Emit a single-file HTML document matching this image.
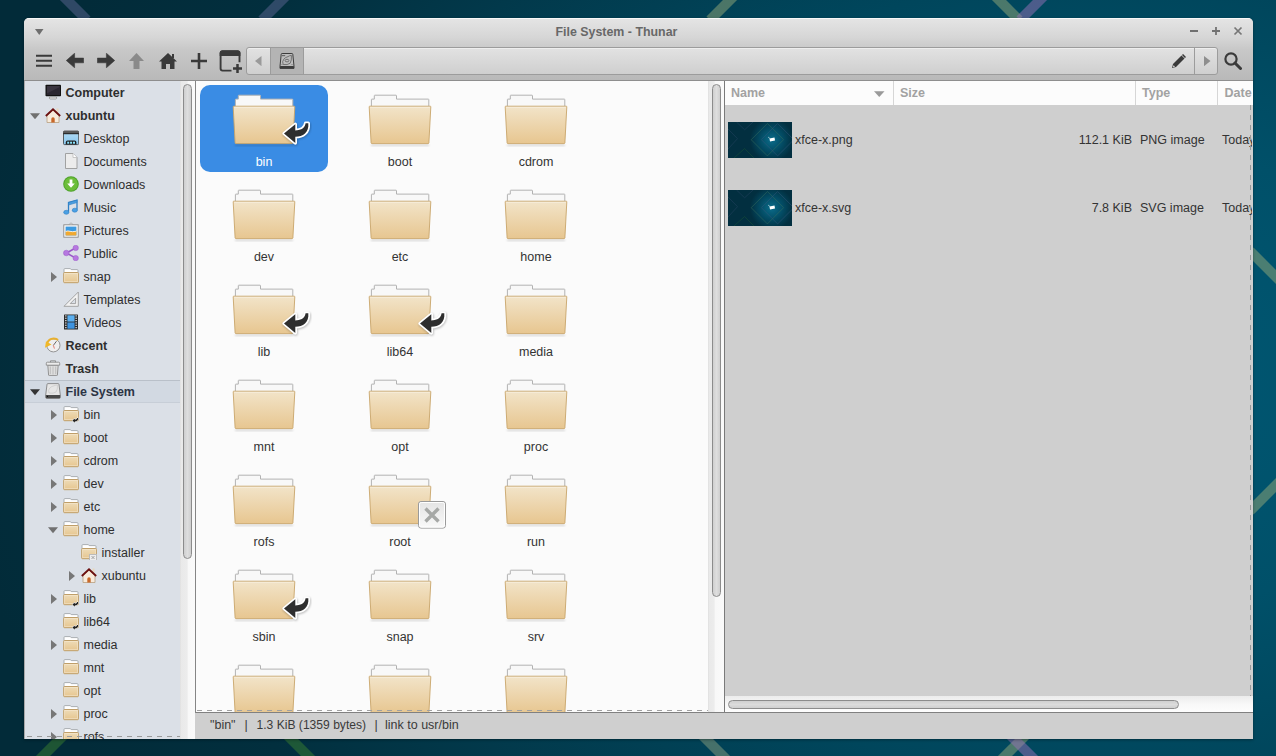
<!DOCTYPE html><html><head><meta charset="utf-8"><style>
*{margin:0;padding:0;box-sizing:border-box}
html,body{width:1276px;height:756px;overflow:hidden}
body{position:relative;font-family:"Liberation Sans", sans-serif;font-size:12.5px;color:#333;
background:radial-gradient(1150px 800px at 1100px 380px,#005874 0%,#005069 30%,#00465c 50%,#02394b 70%,#022f3e 85%,#022b39 100%);}
.a{position:absolute}
.t{position:absolute;white-space:pre;line-height:15px}
.b{font-weight:bold}
#win{left:24px;top:18px;width:1229px;height:721px;border-radius:5px 5px 0 0;overflow:hidden;
background:#cfcfcf;box-shadow:0 1px 3px rgba(0,0,0,.35)}
#head{left:0;top:0;width:1229px;height:62px;background:linear-gradient(#e4e4e4,#d6d6d6 30%,#c8c8c8 50%,#b9b9b9);border-top:1px solid #f8f8f8}
</style></head><body>
<svg class="a" style="left:0;top:0" width="1276" height="756"><g stroke-width="10"><line x1="62" y1="-5" x2="87" y2="20" stroke="rgba(91,102,145,.5)"/><line x1="287" y1="-5" x2="262" y2="20" stroke="rgba(91,102,145,.5)"/><line x1="735" y1="-5" x2="710" y2="20" stroke="rgba(150,170,120,.5)"/><line x1="994" y1="-5" x2="1019" y2="20" stroke="rgba(150,170,120,.5)"/><line x1="1045" y1="-5" x2="1020" y2="20" stroke="rgba(152,114,184,.5)"/><line x1="1250" y1="251" x2="1280" y2="281" stroke="rgba(150,170,120,.5)"/><line x1="1250" y1="511" x2="1280" y2="481" stroke="rgba(150,170,120,.5)"/><line x1="64" y1="735" x2="39" y2="760" stroke="rgba(58,127,48,.5)"/><line x1="287" y1="735" x2="312" y2="760" stroke="rgba(58,127,48,.5)"/><line x1="702" y1="735" x2="727" y2="760" stroke="rgba(140,160,126,.5)"/><line x1="1026" y1="735" x2="1001" y2="760" stroke="rgba(150,170,120,.5)"/><line x1="1010" y1="735" x2="1035" y2="760" stroke="rgba(152,114,184,.5)"/></g></svg>
<svg width="0" height="0" style="position:absolute"><defs>
<linearGradient id="gf" x1="0" y1="0" x2="0" y2="1"><stop offset="0" stop-color="#f3e4c8"/><stop offset="1" stop-color="#e6c48e"/></linearGradient>
<linearGradient id="gfs" x1="0" y1="0" x2="0" y2="1"><stop offset="0" stop-color="#eedcb8"/><stop offset="1" stop-color="#e6c58e"/></linearGradient>
<linearGradient id="gbf" x1="0" y1="0" x2="0" y2="1"><stop offset="0" stop-color="#f2e4c9"/><stop offset="1" stop-color="#e7c690"/></linearGradient>
<linearGradient id="gxb" x1="0" y1="0" x2="0" y2="1"><stop offset="0" stop-color="#e4e4e4"/><stop offset="1" stop-color="#f9f9f9"/></linearGradient>
<filter id="fsh" x="-20%" y="-20%" width="140%" height="140%"><feGaussianBlur stdDeviation="0.8"/></filter>
<symbol id="bf" viewBox="0 0 80 60"><path d="M3.4 12.5V5.6Q3.4 5.1 3.9 5.1H6.3V1.7Q6.3 1.2 6.8 1.2H28Q28.5 1.2 28.5 1.7V5.1H60.3Q60.8 5.1 60.8 5.6V12.5Z" fill="#f8f8f8" stroke="#b2b2b2" stroke-width="1"/><path d="M3.5 50.5H60.5L61.5 52H2.5Z" fill="#000" opacity=".18" filter="url(#fsh)"/><path d="M1.8 12.2H62.2Q62.9 12.2 62.8 12.9L60.9 48.9Q60.8 49.6 60.1 49.6H3.9Q3.2 49.6 3.1 48.9L1.2 12.9Q1.1 12.2 1.8 12.2Z" fill="url(#gbf)" stroke="#c8a56a" stroke-width="0.9"/><path d="M2.2 13.3H61.8" stroke="#f7eddb" stroke-width="1"/></symbol>
<symbol id="emb-l" viewBox="0 0 80 60"><path d="M52 39.5L63.3 30.3V36.4C68 36.4 72.7 35 73.6 29.3H76.3C77.2 38.5 71 42.8 63.3 42.8V49Z" fill="#000" opacity=".25" transform="translate(0.6 1)" stroke="#000" stroke-width="3.6" stroke-linejoin="round" filter="url(#fsh)"/><path d="M52 39.5L63.3 30.3V36.4C68 36.4 72.7 35 73.6 29.3H76.3C77.2 38.5 71 42.8 63.3 42.8V49Z" fill="#2e2e2e" stroke="#fff" stroke-width="3.4" stroke-linejoin="round" paint-order="stroke"/></symbol>
<symbol id="emb-x" viewBox="0 0 80 60"><rect x="50.5" y="27.5" width="27" height="26.6" rx="2.5" fill="url(#gxb)" stroke="#9a9a9a" stroke-width="1"/><rect x="51.5" y="28.5" width="25" height="24.6" rx="1.8" fill="none" stroke="#fff" stroke-width="1"/><path d="M57.5 34.5L70.5 47.5M70.5 34.5L57.5 47.5" stroke="#a6a8a6" stroke-width="3.4"/></symbol>
<radialGradient id="gth" cx="0.68" cy="0.5" r="0.6" gradientTransform="translate(0.68 0.5) scale(0.5625 1) translate(-0.68 -0.5)"><stop offset="0" stop-color="#0b6c8a"/><stop offset="0.55" stop-color="#034a62"/><stop offset="1" stop-color="#022f40"/></radialGradient>
<symbol id="thumb" viewBox="0 0 64 36"><rect width="64" height="36" fill="#02303f"/><rect width="64" height="36" fill="url(#gth)"/>
<g fill="none" stroke-width="0.45"><path d="M39.4 1.5L55.6 17.7L39.4 33.9L23.2 17.7Z" stroke="#3f7560"/><path d="M49.6 1.5L65.8 17.7L49.6 33.9L33.4 17.7Z" stroke="#3d5a80"/>
<path d="M8.5 0L16.6 7.8L25 0" stroke="#2d4866"/><path d="M0 7L9.5 16.7L0 27" stroke="#2d4866"/><path d="M6 36L16.6 26.5L26 36" stroke="#1f5a36"/></g>
<path d="M41.5 16.5L46.5 15.5L47 18.5L42 19.5Z" fill="#fff"/><path d="M40 15L42 16.5" stroke="#fff" stroke-width="0.5"/></symbol>
<symbol id="i-fold" viewBox="0 0 16 16"><path d="M1 4.8V1.5Q1 0.6 1.9 0.6H7Q7.8 0.6 8.2 1.6H14.1Q15 1.6 15 2.5V4.8Z" fill="#fff" stroke="#a2a6aa" stroke-width="0.9"/><rect x="0.7" y="4.5" width="14.7" height="10.2" rx="0.8" fill="url(#gfs)" stroke="#bf9e68" stroke-width="1"/><rect x="1.7" y="5.6" width="12.7" height="8.1" fill="none" stroke="#f6ead4" stroke-width="0.7" opacity=".8"/></symbol>
<symbol id="i-foldl" viewBox="0 0 16 20"><use href="#i-fold" width="16" height="16"/><path d="M9.4 14.6L11.8 12.4V13.7Q13.8 13.7 14.2 12H15.3Q15.3 15.3 11.8 15.4V16.8Z" fill="#222" stroke="#fff" stroke-width="1" stroke-linejoin="round" paint-order="stroke"/></symbol>
<symbol id="i-foldx" viewBox="0 0 16 16"><use href="#i-fold"/><rect x="8.5" y="10.5" width="7" height="6" fill="#eee" stroke="#bbb" stroke-width="1"/><path d="M10.5 12L13.5 15M13.5 12L10.5 15" stroke="#999" stroke-width="0.9"/></symbol>
<symbol id="i-comp" viewBox="0 0 16 16"><rect x="0.5" y="0.8" width="15.5" height="11.5" rx="0.8" fill="#111"/><rect x="1.8" y="2" width="13" height="9" fill="#3a3540"/><path d="M1.8 9.5L14.8 3V11H1.8Z" fill="#2a2630"/><path d="M4.5 13H11.5Q12 15 11 15H5Q4 15 4.5 13Z" fill="#e8e8e8" stroke="#888" stroke-width="0.7"/></symbol>
<symbol id="i-home" viewBox="0 0 16 16"><path d="M2 8.5V15.5H14V8.5L8 3Z" fill="#f7ebdc" stroke="#b8a080" stroke-width="0.8"/><rect x="11.5" y="1.5" width="2" height="4" fill="#e8d8c0"/><path d="M0.8 9L8 2.3L15.2 9" fill="none" stroke="#6b1010" stroke-width="1.8"/><path d="M6.3 15.6V12Q6.3 10.3 8 10.3Q9.7 10.3 9.7 12V15.6Z" fill="#c8682a"/></symbol>
<linearGradient id="gdk" x1="0" y1="0" x2="0" y2="1"><stop offset="0" stop-color="#b4dcf4"/><stop offset="1" stop-color="#88c6ee"/></linearGradient><symbol id="i-desk" viewBox="0 0 16 16"><rect x="0.5" y="1.2" width="15.2" height="13.4" rx="1" fill="url(#gdk)" stroke="#3a3a3a" stroke-width="0.8"/><path d="M0.1 4.1V2.2Q0.1 0.8 1.5 0.8H14.7Q16.1 0.8 16.1 2.2V4.1Z" fill="#5a5a5a"/><rect x="0.1" y="3.3" width="16" height="0.9" fill="#1a1a1a"/><path d="M2.8 14.6V12.4Q2.8 10.6 4.6 10.6H11.6Q13.4 10.6 13.4 12.4V14.6Z" fill="#1e1e1e"/><rect x="4.2" y="11.7" width="2" height="2" fill="#8ae4ff"/><rect x="7.1" y="11.7" width="2" height="2" fill="#8ae4ff"/><rect x="10" y="11.7" width="2" height="2" fill="#8ae4ff"/></symbol>
<symbol id="i-doc" viewBox="0 0 16 16"><path d="M2.5 0.5H10L14 4.5V15.5H2.5Z" fill="#ececec" stroke="#9a9a9a" stroke-width="0.9"/><path d="M10 0.5V4.5H14" fill="#fff" stroke="#bbb" stroke-width="0.8"/></symbol>
<symbol id="i-dl" viewBox="0 0 16 16"><circle cx="8" cy="8" r="7.8" fill="#4ea22a"/><circle cx="8" cy="8" r="6.8" fill="#6cbe3a"/><path d="M6.6 3.5H9.4V7.5H11.8L8 11.8L4.2 7.5H6.6Z" fill="#fff"/></symbol>
<symbol id="i-music" viewBox="0 0 16 16"><path d="M5.5 12.8V3.6L14 1.2V10.8" fill="none" stroke="#2f7fc4" stroke-width="1.3"/><path d="M5.5 3.6L14 1.2V3.6L5.5 6Z" fill="#4a9ee0" stroke="#2f7fc4" stroke-width="0.6"/><ellipse cx="3.3" cy="13.3" rx="2.6" ry="2" fill="#4aa0e4" stroke="#2f7fc4" stroke-width="0.6"/><ellipse cx="11.8" cy="11.2" rx="2.6" ry="2" fill="#4aa0e4" stroke="#2f7fc4" stroke-width="0.6"/></symbol>
<symbol id="i-pic" viewBox="0 0 16 16"><path d="M5.5 3L8 0.8L10.5 3" fill="#f4f4f4" stroke="#999" stroke-width="0.7"/><rect x="0.8" y="2.8" width="14.4" height="12.4" fill="#fafafa" stroke="#8a8a8a" stroke-width="0.9"/><rect x="2.6" y="4.6" width="10.8" height="8.8" fill="#3c9ae0"/><path d="M2.6 9.3Q5 8.3 7 9.2T13.4 9V13.4H2.6Z" fill="#f0a830"/><path d="M2.6 9.5Q5 8.5 7 9.3T13.4 9.2" fill="none" stroke="#fff" stroke-width="0.8"/></symbol>
<symbol id="i-pub" viewBox="0 0 16 16"><path d="M3.5 8L12.5 3M3.5 8L12.5 13" stroke="#9a58c8" stroke-width="1.5"/><circle cx="3.3" cy="8" r="2.8" fill="#b678e0" stroke="#9a58c8" stroke-width="0.5"/><circle cx="12.7" cy="2.9" r="2.7" fill="#b678e0" stroke="#9a58c8" stroke-width="0.5"/><circle cx="12.7" cy="13.1" r="2.7" fill="#b678e0" stroke="#9a58c8" stroke-width="0.5"/></symbol>
<symbol id="i-tmpl" viewBox="0 0 16 16"><path d="M1 15.3L15.3 1V15.3Z M7.2 12.6H12.6V7.2Z" fill="#f2f2f2" fill-rule="evenodd" stroke="#9c9c9c" stroke-width="0.9" stroke-linejoin="round"/></symbol>
<symbol id="i-vid" viewBox="0 0 16 16"><rect x="1" y="0.5" width="14" height="15" rx="0.5" fill="#2a2a2a"/><rect x="4.4" y="1.3" width="7.2" height="6.3" fill="#5cb0f0"/><rect x="4.4" y="8.4" width="7.2" height="6.3" fill="#3f94e0"/><rect x="2.2" y="1.30" width="1.3" height="1.2" fill="#eee"/><rect x="12.5" y="1.30" width="1.3" height="1.2" fill="#eee"/><rect x="2.2" y="3.65" width="1.3" height="1.2" fill="#eee"/><rect x="12.5" y="3.65" width="1.3" height="1.2" fill="#eee"/><rect x="2.2" y="6.00" width="1.3" height="1.2" fill="#eee"/><rect x="12.5" y="6.00" width="1.3" height="1.2" fill="#eee"/><rect x="2.2" y="8.35" width="1.3" height="1.2" fill="#eee"/><rect x="12.5" y="8.35" width="1.3" height="1.2" fill="#eee"/><rect x="2.2" y="10.70" width="1.3" height="1.2" fill="#eee"/><rect x="12.5" y="10.70" width="1.3" height="1.2" fill="#eee"/><rect x="2.2" y="13.05" width="1.3" height="1.2" fill="#eee"/><rect x="12.5" y="13.05" width="1.3" height="1.2" fill="#eee"/></symbol>
<symbol id="i-recent" viewBox="0 0 16 16"><circle cx="8.4" cy="8.3" r="6.6" fill="#efefef" stroke="#8a8a8a" stroke-width="0.9"/><path d="M8.4 8.3L11.5 4.2" stroke="#444" stroke-width="0.8"/><path d="M8.4 8.3L9.4 11.6" stroke="#e06050" stroke-width="0.8"/><path d="M2.2 6.5Q3.5 1.6 8.8 1.4Q11.5 1.4 13 3" fill="none" stroke="#e8b030" stroke-width="2"/><path d="M0 10.8L1 4.2L6.5 7.5Z" fill="#f0b828"/></symbol>
<symbol id="i-trash" viewBox="0 0 16 16"><path d="M2.8 5.2L3.6 15Q3.7 15.6 4.3 15.6H11.7Q12.3 15.6 12.4 15L13.2 5.2Z" fill="#dedede" stroke="#8a8a8a" stroke-width="0.9"/><path d="M5.3 6.5V14.2M8 6.5V14.5M10.7 6.5V14.2" stroke="#b8b8b8" stroke-width="0.9"/><path d="M1.3 3.2Q1.3 2.2 2.3 2.2H13.7Q14.7 2.2 14.7 3.2V5.2H1.3Z" fill="#ececec" stroke="#8a8a8a" stroke-width="0.9"/><path d="M5.5 2.2V0.8H10.5V2.2" fill="none" stroke="#8a8a8a" stroke-width="0.9"/></symbol>
<symbol id="i-hd" viewBox="0 0 16 16"><path d="M2 1.5Q2.1 0.6 3 0.6H13Q13.9 0.6 14 1.5L15.3 12V14.5Q15.3 15.4 14.4 15.4H1.6Q0.7 15.4 0.7 14.5V12Z" fill="#e6e6e6" stroke="#777" stroke-width="0.8"/><path d="M0.8 12H15.2V14.5Q15.2 15.3 14.4 15.3H1.6Q0.8 15.3 0.8 14.5Z" fill="#4a4a4a"/><circle cx="2.5" cy="13.4" r="0.6" fill="#111"/><path d="M4 10Q2.8 7 4.8 5Q6.5 3.2 9 2.8Q11 2 12.5 2.2Q12.8 6.5 11 9Q8.5 10.8 4 10Z" fill="none" stroke="#c8c8c8" stroke-width="0.7"/></symbol>
</defs></svg>
<div id="win" class="a">
<div id="head" class="a"></div>
<svg class="a" style="left:11px;top:11px" width="9" height="6" viewBox="0 0 9 6" ><path d="M0 0H8.5L4.25 6Z" fill="#6e6e6e"/></svg>
<div class="t b" style="left:531.5px;top:7px;color:#686868;font-size:12.4px">File System - Thunar</div>
<svg class="a" style="left:1165px;top:8px" width="10" height="10" viewBox="0 0 10 10" ><rect x="1" y="4" width="8" height="2" fill="#707070"/></svg>
<svg class="a" style="left:1187px;top:8px" width="10" height="10" viewBox="0 0 10 10" ><path d="M1 5H9M5 1V9" stroke="#727272" stroke-width="1.8"/></svg>
<svg class="a" style="left:1209px;top:8px" width="10" height="10" viewBox="0 0 10 10" ><path d="M1.5 1.5L8.5 8.5M8.5 1.5L1.5 8.5" stroke="#767676" stroke-width="1.7"/></svg>
<svg class="a" style="left:12px;top:36px" width="16" height="14" viewBox="0 0 16 14" ><path d="M0 1.8H16M0 6.8H16M0 11.8H16" stroke="#3a3a3a" stroke-width="2"/></svg>
<svg class="a" style="left:42px;top:35px" width="18" height="15" viewBox="0 0 18 15" ><path d="M0.3 7.5L8.6 0.2V5.1H17.6V9.8H8.6V14.8Z" fill="#3a3a3a" stroke="#3a3a3a" stroke-width="0.6" stroke-linejoin="round"/></svg>
<svg class="a" style="left:73px;top:35px" width="18" height="15" viewBox="0 0 18 15" ><path d="M17.7 7.5L9.4 0.2V5.1H0.4V9.8H9.4V14.8Z" fill="#3a3a3a" stroke="#3a3a3a" stroke-width="0.6" stroke-linejoin="round"/></svg>
<svg class="a" style="left:105px;top:35px" width="15" height="16" viewBox="0 0 15 16" ><path d="M7.5 0L15 8H10.5V16H4.5V8H0Z" fill="#8a8a8a"/></svg>
<svg class="a" style="left:135px;top:35px" width="18" height="16" viewBox="0 0 18 16" ><path d="M9 0L18 8.5H15.5V16H11V11H7V16H2.5V8.5H0Z" fill="#3a3a3a"/><rect x="13" y="1" width="2" height="4" fill="#3a3a3a"/></svg>
<svg class="a" style="left:167px;top:35px" width="16" height="16" viewBox="0 0 16 16" ><path d="M0 8H16M8 0V16" stroke="#3a3a3a" stroke-width="2.6"/></svg>
<svg class="a" style="left:195px;top:32px" width="24" height="24" viewBox="0 0 24 24" ><path d="M1.6 13V18.5Q1.6 20.6 3.6 20.6H12.5M1.6 13V3.2Q1.6 1.3 3.5 1.3H18.6Q20.5 1.3 20.5 3.2V12.3" stroke="#3a3a3a" stroke-width="1.9" fill="none"/><path d="M0.7 6H21.4V3.2Q21.4 0.4 18.6 0.4H3.5Q0.7 0.4 0.7 3.2Z" fill="#3a3a3a"/><path d="M14 18.5H23M18.5 14V23" stroke="#3a3a3a" stroke-width="2.5"/></svg>
<div class="a" style="left:222px;top:29px;width:972px;height:28px;border:1px solid #9c9c9c;border-radius:3px;background:linear-gradient(#e2e2e2,#cfcfcf);box-shadow:inset 0 1px 0 #eee"></div>
<div class="a" style="left:246px;top:30px;width:34px;height:26px;background:#b4b4b4;border-left:1px solid #9c9c9c;border-right:1px solid #9c9c9c"></div>
<div class="a" style="left:1170px;top:30px;width:1px;height:26px;background:#9c9c9c"></div>
<svg class="a" style="left:230.5px;top:38px" width="7" height="10" viewBox="0 0 7 10" ><path d="M6.5 0V10.2L0 5.1Z" fill="#9a9a9a"/></svg>
<svg class="a" style="left:1180px;top:38px" width="7" height="10" viewBox="0 0 7 10" ><path d="M0 0V10.2L6.5 5.1Z" fill="#8e8e8e"/></svg>
<svg class="a" style="left:255px;top:35px" width="16" height="16" viewBox="0 0 16 16" ><path d="M2.2 1.3Q2.3 0.5 3.1 0.5H12.9Q13.7 0.5 13.8 1.3L15 13.2V15Q15 15.8 14.2 15.8H1.8Q1 15.8 1 15V13.2Z" fill="#bdbdbd" stroke="#3c3c3c" stroke-width="1"/><rect x="1" y="13" width="14" height="2.8" rx="0.6" fill="#3c3c3c"/><path d="M4.2 11.5Q2.8 8.5 4.8 6.2Q6.5 4.2 9 3.6Q10.8 2.4 12.4 2.4Q12.8 7.5 11.2 10.2Q8.5 12.3 4.2 11.5Z" fill="none" stroke="#6a6a6a" stroke-width="0.9"/><ellipse cx="8" cy="7.6" rx="1.9" ry="1.3" fill="none" stroke="#6a6a6a" stroke-width="0.9"/><rect x="3" y="2" width="3.2" height="1.2" fill="#6a6a6a"/><circle cx="3" cy="11.6" r="0.5" fill="#6a6a6a"/><circle cx="13" cy="11.6" r="0.5" fill="#6a6a6a"/></svg>
<svg class="a" style="left:1147px;top:36px" width="15" height="15" viewBox="0 0 15 15" ><path d="M1 14L2 10L10.5 1.5L13.5 4.5L5 13Z" fill="#3a3a3a"/><path d="M11.5 0.5L14.5 3.5" stroke="#3a3a3a" stroke-width="1.5"/><path d="M2 13.2L2.6 11.2L4 12.6Z" fill="#eee"/></svg>
<svg class="a" style="left:1200px;top:34px" width="18" height="18" viewBox="0 0 18 18" ><circle cx="7" cy="7" r="5.6" fill="none" stroke="#3a3a3a" stroke-width="2.2"/><path d="M11 11L16.5 16.5" stroke="#3a3a3a" stroke-width="3" stroke-linecap="round"/></svg>
<div class="a" style="left:0;top:63px;width:156px;height:658px;background:#dbe0e7;border-left:1px solid #a8a8a8"></div>
<div class="a" style="left:156px;top:63px;width:15px;height:658px;background:linear-gradient(90deg,#dcdcdc 0,#e9e9e9 1px,#ececec 7px,#f8f8f8 8.5px,#fafafa)"></div>
<div class="a" style="left:159px;top:66px;width:9px;height:475px;border:1px solid #8c8c8c;border-radius:5px;background:linear-gradient(90deg,#cfcfcf,#dedede 50%,#cfcfcf)"></div>
<div class="a" style="left:171px;top:63px;width:1px;height:632px;background:#858585"></div>
<div class="a" style="left:1px;top:362px;width:155px;height:23px;background:#d2d9e2;border-top:1px solid #b9c0c9;border-bottom:1px solid #c7ced7"></div>
<div class="a" style="left:1px;top:63px;width:155px;height:658px;overflow:hidden">
<svg class="a" style="left:20px;top:3px" width="16" height="20" viewBox="0 0 16 20" ><use href="#i-comp" width="16" height="16"/></svg>
<div class="t b" style="left:40.5px;top:5px;color:#2e2e2e">Computer</div>
<svg class="a" style="left:5px;top:31.5px" width="11" height="7" viewBox="0 0 11 7" ><path d="M0 0.3H10L5 6.3Z" fill="#707070"/></svg>
<svg class="a" style="left:20px;top:26px" width="16" height="20" viewBox="0 0 16 20" ><use href="#i-home" width="16" height="16"/></svg>
<div class="t b" style="left:40.5px;top:28px;color:#2e2e2e">xubuntu</div>
<svg class="a" style="left:38px;top:49px" width="16" height="20" viewBox="0 0 16 20" ><use href="#i-desk" width="16" height="16"/></svg>
<div class="t" style="left:58.5px;top:51px;color:#2e2e2e">Desktop</div>
<svg class="a" style="left:38px;top:72px" width="16" height="20" viewBox="0 0 16 20" ><use href="#i-doc" width="16" height="16"/></svg>
<div class="t" style="left:58.5px;top:74px;color:#2e2e2e">Documents</div>
<svg class="a" style="left:38px;top:95px" width="16" height="20" viewBox="0 0 16 20" ><use href="#i-dl" width="16" height="16"/></svg>
<div class="t" style="left:58.5px;top:97px;color:#2e2e2e">Downloads</div>
<svg class="a" style="left:38px;top:118px" width="16" height="20" viewBox="0 0 16 20" ><use href="#i-music" width="16" height="16"/></svg>
<div class="t" style="left:58.5px;top:120px;color:#2e2e2e">Music</div>
<svg class="a" style="left:38px;top:141px" width="16" height="20" viewBox="0 0 16 20" ><use href="#i-pic" width="16" height="16"/></svg>
<div class="t" style="left:58.5px;top:143px;color:#2e2e2e">Pictures</div>
<svg class="a" style="left:38px;top:164px" width="16" height="20" viewBox="0 0 16 20" ><use href="#i-pub" width="16" height="16"/></svg>
<div class="t" style="left:58.5px;top:166px;color:#2e2e2e">Public</div>
<svg class="a" style="left:26px;top:190.5px" width="7" height="10" viewBox="0 0 7 10" ><path d="M0 0V10L6 5Z" fill="#777"/></svg>
<svg class="a" style="left:38px;top:187px" width="16" height="20" viewBox="0 0 16 20" ><use href="#i-fold" width="16" height="16"/></svg>
<div class="t" style="left:58.5px;top:189px;color:#2e2e2e">snap</div>
<svg class="a" style="left:38px;top:210px" width="16" height="20" viewBox="0 0 16 20" ><use href="#i-tmpl" width="16" height="16"/></svg>
<div class="t" style="left:58.5px;top:212px;color:#2e2e2e">Templates</div>
<svg class="a" style="left:38px;top:233px" width="16" height="20" viewBox="0 0 16 20" ><use href="#i-vid" width="16" height="16"/></svg>
<div class="t" style="left:58.5px;top:235px;color:#2e2e2e">Videos</div>
<svg class="a" style="left:20px;top:256px" width="16" height="20" viewBox="0 0 16 20" ><use href="#i-recent" width="16" height="16"/></svg>
<div class="t b" style="left:40.5px;top:258px;color:#2e2e2e">Recent</div>
<svg class="a" style="left:20px;top:279px" width="16" height="20" viewBox="0 0 16 20" ><use href="#i-trash" width="16" height="16"/></svg>
<div class="t b" style="left:40.5px;top:281px;color:#2e2e2e">Trash</div>
<svg class="a" style="left:5px;top:307.5px" width="11" height="7" viewBox="0 0 11 7" ><path d="M0 0.3H10L5 6.3Z" fill="#333"/></svg>
<svg class="a" style="left:20px;top:302px" width="16" height="20" viewBox="0 0 16 20" ><use href="#i-hd" width="16" height="16"/></svg>
<div class="t b" style="left:40.5px;top:304px;color:#2c3445">File System</div>
<svg class="a" style="left:26px;top:328.5px" width="7" height="10" viewBox="0 0 7 10" ><path d="M0 0V10L6 5Z" fill="#777"/></svg>
<svg class="a" style="left:38px;top:325px" width="16" height="20" viewBox="0 0 16 20" ><use href="#i-foldl" width="16" height="20"/></svg>
<div class="t" style="left:58.5px;top:327px;color:#2e2e2e">bin</div>
<svg class="a" style="left:26px;top:351.5px" width="7" height="10" viewBox="0 0 7 10" ><path d="M0 0V10L6 5Z" fill="#777"/></svg>
<svg class="a" style="left:38px;top:348px" width="16" height="20" viewBox="0 0 16 20" ><use href="#i-fold" width="16" height="16"/></svg>
<div class="t" style="left:58.5px;top:350px;color:#2e2e2e">boot</div>
<svg class="a" style="left:26px;top:374.5px" width="7" height="10" viewBox="0 0 7 10" ><path d="M0 0V10L6 5Z" fill="#777"/></svg>
<svg class="a" style="left:38px;top:371px" width="16" height="20" viewBox="0 0 16 20" ><use href="#i-fold" width="16" height="16"/></svg>
<div class="t" style="left:58.5px;top:373px;color:#2e2e2e">cdrom</div>
<svg class="a" style="left:26px;top:397.5px" width="7" height="10" viewBox="0 0 7 10" ><path d="M0 0V10L6 5Z" fill="#777"/></svg>
<svg class="a" style="left:38px;top:394px" width="16" height="20" viewBox="0 0 16 20" ><use href="#i-fold" width="16" height="16"/></svg>
<div class="t" style="left:58.5px;top:396px;color:#2e2e2e">dev</div>
<svg class="a" style="left:26px;top:420.5px" width="7" height="10" viewBox="0 0 7 10" ><path d="M0 0V10L6 5Z" fill="#777"/></svg>
<svg class="a" style="left:38px;top:417px" width="16" height="20" viewBox="0 0 16 20" ><use href="#i-fold" width="16" height="16"/></svg>
<div class="t" style="left:58.5px;top:419px;color:#2e2e2e">etc</div>
<svg class="a" style="left:23px;top:445.5px" width="11" height="7" viewBox="0 0 11 7" ><path d="M0 0.3H10L5 6.3Z" fill="#707070"/></svg>
<svg class="a" style="left:38px;top:440px" width="16" height="20" viewBox="0 0 16 20" ><use href="#i-fold" width="16" height="16"/></svg>
<div class="t" style="left:58.5px;top:442px;color:#2e2e2e">home</div>
<svg class="a" style="left:56px;top:463px" width="16" height="20" viewBox="0 0 16 20" ><use href="#i-foldx" width="16" height="16"/></svg>
<div class="t" style="left:76.5px;top:465px;color:#2e2e2e">installer</div>
<svg class="a" style="left:44px;top:489.5px" width="7" height="10" viewBox="0 0 7 10" ><path d="M0 0V10L6 5Z" fill="#777"/></svg>
<svg class="a" style="left:56px;top:486px" width="16" height="20" viewBox="0 0 16 20" ><use href="#i-home" width="16" height="16"/></svg>
<div class="t" style="left:76.5px;top:488px;color:#2e2e2e">xubuntu</div>
<svg class="a" style="left:26px;top:512.5px" width="7" height="10" viewBox="0 0 7 10" ><path d="M0 0V10L6 5Z" fill="#777"/></svg>
<svg class="a" style="left:38px;top:509px" width="16" height="20" viewBox="0 0 16 20" ><use href="#i-foldl" width="16" height="20"/></svg>
<div class="t" style="left:58.5px;top:511px;color:#2e2e2e">lib</div>
<svg class="a" style="left:38px;top:532px" width="16" height="20" viewBox="0 0 16 20" ><use href="#i-foldl" width="16" height="20"/></svg>
<div class="t" style="left:58.5px;top:534px;color:#2e2e2e">lib64</div>
<svg class="a" style="left:26px;top:558.5px" width="7" height="10" viewBox="0 0 7 10" ><path d="M0 0V10L6 5Z" fill="#777"/></svg>
<svg class="a" style="left:38px;top:555px" width="16" height="20" viewBox="0 0 16 20" ><use href="#i-fold" width="16" height="16"/></svg>
<div class="t" style="left:58.5px;top:557px;color:#2e2e2e">media</div>
<svg class="a" style="left:38px;top:578px" width="16" height="20" viewBox="0 0 16 20" ><use href="#i-fold" width="16" height="16"/></svg>
<div class="t" style="left:58.5px;top:580px;color:#2e2e2e">mnt</div>
<svg class="a" style="left:38px;top:601px" width="16" height="20" viewBox="0 0 16 20" ><use href="#i-fold" width="16" height="16"/></svg>
<div class="t" style="left:58.5px;top:603px;color:#2e2e2e">opt</div>
<svg class="a" style="left:26px;top:627.5px" width="7" height="10" viewBox="0 0 7 10" ><path d="M0 0V10L6 5Z" fill="#777"/></svg>
<svg class="a" style="left:38px;top:624px" width="16" height="20" viewBox="0 0 16 20" ><use href="#i-fold" width="16" height="16"/></svg>
<div class="t" style="left:58.5px;top:626px;color:#2e2e2e">proc</div>
<svg class="a" style="left:26px;top:650.5px" width="7" height="10" viewBox="0 0 7 10" ><path d="M0 0V10L6 5Z" fill="#777"/></svg>
<svg class="a" style="left:38px;top:647px" width="16" height="20" viewBox="0 0 16 20" ><use href="#i-fold" width="16" height="16"/></svg>
<div class="t" style="left:58.5px;top:649px;color:#2e2e2e">rofs</div>
</div>
<div class="a" style="left:1px;top:718px;width:155px;height:1px;background:repeating-linear-gradient(90deg,transparent 0 2px,#9a9a9a 2px 7px,transparent 7px 10px)"></div>
<div class="a" style="left:172px;top:63px;width:512px;height:631px;background:#fbfbfb"></div>
<div class="a" style="left:684px;top:63px;width:16px;height:631px;background:linear-gradient(90deg,#dcdcdc 0,#e9e9e9 1px,#ececec 6px,#f8f8f8 7.5px,#fafafa)"></div>
<div class="a" style="left:688px;top:66px;width:9px;height:513px;border:1px solid #8c8c8c;border-radius:5px;background:linear-gradient(90deg,#cfcfcf,#dedede 50%,#cfcfcf)"></div>
<div class="a" style="left:700px;top:63px;width:1px;height:632px;background:#7a7a7a"></div>
<div class="a" style="left:176px;top:67px;width:128px;height:87px;background:#3a8ce4;border-radius:10px"></div>
<div class="a" style="left:172px;top:63px;width:512px;height:631px;overflow:hidden">
<svg class="a" style="left:36px;top:13px" width="80" height="60" viewBox="0 0 80 60" ><use href="#bf"/><use href="#emb-l"/></svg>
<div class="t" style="left:8px;top:74px;width:120px;text-align:center;color:#ffffff">bin</div>
<svg class="a" style="left:172px;top:13px" width="80" height="60" viewBox="0 0 80 60" ><use href="#bf"/></svg>
<div class="t" style="left:144px;top:74px;width:120px;text-align:center;color:#333">boot</div>
<svg class="a" style="left:308px;top:13px" width="80" height="60" viewBox="0 0 80 60" ><use href="#bf"/></svg>
<div class="t" style="left:280px;top:74px;width:120px;text-align:center;color:#333">cdrom</div>
<svg class="a" style="left:36px;top:108px" width="80" height="60" viewBox="0 0 80 60" ><use href="#bf"/></svg>
<div class="t" style="left:8px;top:169px;width:120px;text-align:center;color:#333">dev</div>
<svg class="a" style="left:172px;top:108px" width="80" height="60" viewBox="0 0 80 60" ><use href="#bf"/></svg>
<div class="t" style="left:144px;top:169px;width:120px;text-align:center;color:#333">etc</div>
<svg class="a" style="left:308px;top:108px" width="80" height="60" viewBox="0 0 80 60" ><use href="#bf"/></svg>
<div class="t" style="left:280px;top:169px;width:120px;text-align:center;color:#333">home</div>
<svg class="a" style="left:36px;top:203px" width="80" height="60" viewBox="0 0 80 60" ><use href="#bf"/><use href="#emb-l"/></svg>
<div class="t" style="left:8px;top:264px;width:120px;text-align:center;color:#333">lib</div>
<svg class="a" style="left:172px;top:203px" width="80" height="60" viewBox="0 0 80 60" ><use href="#bf"/><use href="#emb-l"/></svg>
<div class="t" style="left:144px;top:264px;width:120px;text-align:center;color:#333">lib64</div>
<svg class="a" style="left:308px;top:203px" width="80" height="60" viewBox="0 0 80 60" ><use href="#bf"/></svg>
<div class="t" style="left:280px;top:264px;width:120px;text-align:center;color:#333">media</div>
<svg class="a" style="left:36px;top:298px" width="80" height="60" viewBox="0 0 80 60" ><use href="#bf"/></svg>
<div class="t" style="left:8px;top:359px;width:120px;text-align:center;color:#333">mnt</div>
<svg class="a" style="left:172px;top:298px" width="80" height="60" viewBox="0 0 80 60" ><use href="#bf"/></svg>
<div class="t" style="left:144px;top:359px;width:120px;text-align:center;color:#333">opt</div>
<svg class="a" style="left:308px;top:298px" width="80" height="60" viewBox="0 0 80 60" ><use href="#bf"/></svg>
<div class="t" style="left:280px;top:359px;width:120px;text-align:center;color:#333">proc</div>
<svg class="a" style="left:36px;top:393px" width="80" height="60" viewBox="0 0 80 60" ><use href="#bf"/></svg>
<div class="t" style="left:8px;top:454px;width:120px;text-align:center;color:#333">rofs</div>
<svg class="a" style="left:172px;top:393px" width="80" height="60" viewBox="0 0 80 60" ><use href="#bf"/><use href="#emb-x"/></svg>
<div class="t" style="left:144px;top:454px;width:120px;text-align:center;color:#333">root</div>
<svg class="a" style="left:308px;top:393px" width="80" height="60" viewBox="0 0 80 60" ><use href="#bf"/></svg>
<div class="t" style="left:280px;top:454px;width:120px;text-align:center;color:#333">run</div>
<svg class="a" style="left:36px;top:488px" width="80" height="60" viewBox="0 0 80 60" ><use href="#bf"/><use href="#emb-l"/></svg>
<div class="t" style="left:8px;top:549px;width:120px;text-align:center;color:#333">sbin</div>
<svg class="a" style="left:172px;top:488px" width="80" height="60" viewBox="0 0 80 60" ><use href="#bf"/></svg>
<div class="t" style="left:144px;top:549px;width:120px;text-align:center;color:#333">snap</div>
<svg class="a" style="left:308px;top:488px" width="80" height="60" viewBox="0 0 80 60" ><use href="#bf"/></svg>
<div class="t" style="left:280px;top:549px;width:120px;text-align:center;color:#333">srv</div>
<svg class="a" style="left:36px;top:583px" width="80" height="60" viewBox="0 0 80 60" ><use href="#bf"/></svg>
<svg class="a" style="left:172px;top:583px" width="80" height="60" viewBox="0 0 80 60" ><use href="#bf"/></svg>
<svg class="a" style="left:308px;top:583px" width="80" height="60" viewBox="0 0 80 60" ><use href="#bf"/></svg>
</div>
<div class="a" style="left:172px;top:692px;width:512px;height:1px;background:repeating-linear-gradient(90deg,transparent 0 1px,#a0a0a0 1px 6px,transparent 6px 10px)"></div>
<div class="a" style="left:172px;top:694px;width:1057px;height:1px;background:#808080"></div>
<div class="a" style="left:701px;top:63px;width:528px;height:24px;background:#fcfcfc"></div>
<div class="a" style="left:701px;top:87px;width:528px;height:591px;background:#cfcfcf"></div>
<div class="a" style="left:869px;top:63px;width:1px;height:24px;background:#d6d6d6"></div>
<div class="a" style="left:1111px;top:63px;width:1px;height:24px;background:#d6d6d6"></div>
<div class="a" style="left:1193px;top:63px;width:1px;height:24px;background:#d6d6d6"></div>
<div class="t " style="left:707px;top:67.5px;color:#a2a2a2;font-weight:bold">Name</div>
<div class="t " style="left:876px;top:67.5px;color:#a2a2a2;font-weight:bold">Size</div>
<div class="t " style="left:1118px;top:67.5px;color:#a2a2a2;font-weight:bold">Type</div>
<div class="a" style="left:1194px;top:63px;width:34px;height:24px;overflow:hidden"><div class="t" style="left:6.5px;top:4.5px;color:#a2a2a2;font-weight:bold">Date</div></div>
<svg class="a" style="left:849.5px;top:73px" width="12" height="7" viewBox="0 0 12 7" ><path d="M0 0.2H10.5L5.25 6Z" fill="#9a9a9a"/></svg>
<svg class="a" style="left:704px;top:104px" width="64" height="36" viewBox="0 0 64 36" ><use href="#thumb"/></svg>
<div class="t " style="left:771px;top:115px;">xfce-x.png</div>
<div class="t" style="left:1007px;top:115px;width:101px;text-align:right">112.1 KiB</div>
<div class="t " style="left:1116px;top:115px;">PNG image</div>
<div class="a" style="left:1194px;top:104px;width:34px;height:36px;overflow:hidden"><div class="t" style="left:4px;top:11px">Today</div></div>
<svg class="a" style="left:704px;top:172px" width="64" height="36" viewBox="0 0 64 36" ><use href="#thumb"/></svg>
<div class="t " style="left:771px;top:183px;">xfce-x.svg</div>
<div class="t" style="left:1007px;top:183px;width:101px;text-align:right">7.8 KiB</div>
<div class="t " style="left:1116px;top:183px;">SVG image</div>
<div class="a" style="left:1194px;top:172px;width:34px;height:36px;overflow:hidden"><div class="t" style="left:4px;top:11px">Today</div></div>
<div class="a" style="left:1226px;top:87px;width:1px;height:591px;background:repeating-linear-gradient(180deg,#9a9a9a 0 5px,transparent 5px 10px)"></div>
<div class="a" style="left:701px;top:678px;width:528px;height:16px;background:linear-gradient(#ececec,#f8f8f8 50%,#fdfdfd)"></div>
<div class="a" style="left:704px;top:682px;width:451px;height:9px;border:1px solid #8c8c8c;border-radius:5px;background:linear-gradient(#cfcfcf,#dcdcdc 50%,#cfcfcf)"></div>
<div class="a" style="left:172px;top:695px;width:1057px;height:26px;background:#cfcfcf"></div>
<div class="t " style="left:186px;top:700px;color:#3a3a3a">"bin"</div>
<div class="t " style="left:220.5px;top:700px;color:#3a3a3a">|</div>
<div class="t " style="left:232.5px;top:700px;color:#3a3a3a;font-size:12.1px">1.3 KiB (1359 bytes)</div>
<div class="t " style="left:350.5px;top:700px;color:#3a3a3a">|</div>
<div class="t " style="left:361px;top:700px;color:#3a3a3a">link to usr/bin</div>
<div class="a" style="left:0;top:62px;width:1229px;height:1px;background:#8e8e8e"></div>
</div>
</body></html>
